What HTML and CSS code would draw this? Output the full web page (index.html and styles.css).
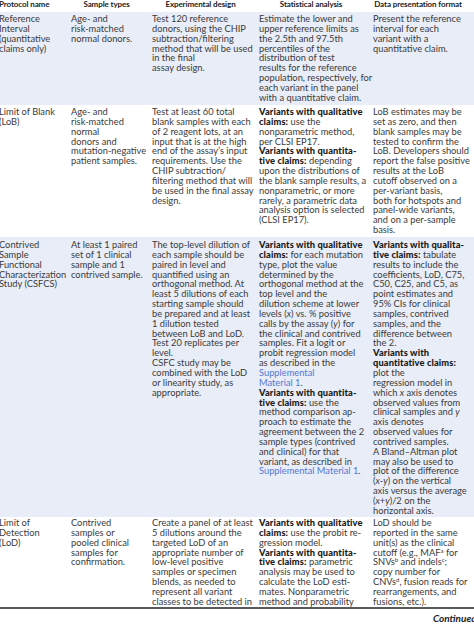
FILE: index.html
```html
<!DOCTYPE html>
<html>
<head>
<meta charset="utf-8">
<link rel="stylesheet" href="styles.css">
</head>
<body>
<div class="page">
  <div class="table">
    <div class="row head">
      <div class="cell first">Protocol name</div>
      <div class="cell">Sample types</div>
      <div class="cell">Experimental design</div>
      <div class="cell">Statistical analysis</div>
      <div class="cell">Data presentation format</div>
    </div>

    <div class="row blue r1">
      <div class="cell first">Reference<br>Interval<br>(quantitative<br>claims only)</div>
      <div class="cell">Age- and<br>risk-matched<br>normal donors.</div>
      <div class="cell">Test 120 reference<br>donors, using the CHIP<br>subtraction/filtering<br>method that will be used<br>in the final<br>assay design.</div>
      <div class="cell stat">Estimate the lower and<br>upper reference limits as<br>the 2.5th and 97.5th<br>percentiles of the<br>distribution of test<br>results for the reference<br>population, respectively, for<br>each variant in the panel<br>with a quantitative claim.</div>
      <div class="cell">Present the reference<br>interval for each<br>variant with a<br>quantitative claim.</div>
    </div>

    <div class="row r2">
      <div class="cell first">Limit of Blank<br>(LoB)</div>
      <div class="cell">Age- and<br>risk-matched<br>normal<br>donors and<br>mutation-negative<br>patient samples.</div>
      <div class="cell">Test at least 60 total<br>blank samples with each<br>of 2 reagent lots, at an<br>input that is at the high<br>end of the assay’s input<br>requirements. Use the<br>CHIP subtraction/<br>filtering method that will<br>be used in the final assay<br>design.</div>
      <div class="cell stat"><b>Variants with qualitative</b><br><b>claims:</b> use the<br>nonparametric method,<br>per CLSI EP17.<br><b>Variants with quantita-</b><br><b>tive claims:</b> depending<br>upon the distributions of<br>the blank sample results, a<br>nonparametric, or more<br>rarely, a parametric data<br>analysis option is selected<br>(CLSI EP17).</div>
      <div class="cell">LoB estimates may be<br>set as zero, and then<br>blank samples may be<br>tested to confirm the<br>LoB. Developers should<br>report the false positive<br>results at the LoB<br>cutoff observed on a<br>per-variant basis,<br>both for hotspots and<br>panel-wide variants,<br>and on a per-sample<br>basis.</div>
    </div>

    <div class="row blue r3">
      <div class="cell first">Contrived<br>Sample<br>Functional<br>Characterization<br>Study (CSFCS)</div>
      <div class="cell">At least 1 paired<br>set of 1 clinical<br>sample and 1<br>contrived sample.</div>
      <div class="cell">The top-level dilution of<br>each sample should be<br>paired in level and<br>quantified using an<br>orthogonal method. At<br>least 5 dilutions of each<br>starting sample should<br>be prepared and at least<br>1 dilution tested<br>between LoB and LoD.<br>Test 20 replicates per<br>level.<br>CSFC study may be<br>combined with the LoD<br>or linearity study, as<br>appropriate.</div>
      <div class="cell stat"><b>Variants with qualitative</b><br><b>claims:</b> for each mutation<br>type, plot the value<br>determined by the<br>orthogonal method at the<br>top level and the<br>dilution scheme at lower<br>levels (<i>x</i>) vs. % positive<br>calls by the assay (<i>y</i>) for<br>the clinical and contrived<br>samples. Fit a logit or<br>probit regression model<br>as described in the<br><span class="link">Supplemental</span><br><span class="link">Material 1</span>.<br><b>Variants with quantita-</b><br><b>tive claims:</b> use the<br>method comparison ap-<br>proach to estimate the<br>agreement between the 2<br>sample types (contrived<br>and clinical) for that<br>variant, as described in<br><span class="link">Supplemental Material 1</span>.</div>
      <div class="cell"><b>Variants with qualita-</b><br><b>tive claims:</b> tabulate<br>results to include the<br>coefficients, LoD, C75,<br>C50, C25, and C5, as<br>point estimates and<br>95% CIs for clinical<br>samples, contrived<br>samples, and the<br>difference between<br>the 2.<br><b>Variants with</b><br><b>quantitative claims:</b><br>plot the<br>regression model in<br>which <i>x</i> axis denotes<br>observed values from<br>clinical samples and <i>y</i><br>axis denotes<br>observed values for<br>contrived samples.<br>A Bland–Altman plot<br>may also be used to<br>plot of the difference<br>(<i>x</i>-<i>y</i>) on the vertical<br>axis versus the average<br>(<i>x</i>+<i>y</i>)/2 on the<br>horizontal axis.</div>
    </div>

    <div class="row r4">
      <div class="cell first">Limit of<br>Detection<br>(LoD)</div>
      <div class="cell">Contrived<br>samples or<br>pooled clinical<br>samples for<br>confirmation.</div>
      <div class="cell">Create a panel of at least<br>5 dilutions around the<br>targeted LoD of an<br>appropriate number of<br>low-level positive<br>samples or specimen<br>blends, as needed to<br>represent all variant<br>classes to be detected in</div>
      <div class="cell stat"><b>Variants with qualitative</b><br><b>claims:</b> use the probit re-<br>gression model.<br><b>Variants with quantita-</b><br><b>tive claims:</b> parametric<br>analysis may be used to<br>calculate the LoD esti-<br>mates. Nonparametric<br>method and probability</div>
      <div class="cell">LoD should be<br>reported in the same<br>unit(s) as the clinical<br>cutoff (e.g., MAF<sup>a</sup> for<br>SNVs<sup>b</sup> and indels<sup>c</sup>;<br>copy number for<br>CNVs<sup>d</sup>, fusion reads for<br>rearrangements, and<br>fusions, etc.).</div>
    </div>
  </div>
  <div class="continued">Continued</div>
</div>
</body>
</html>
```

FILE: styles.css
```css
html, body {
  margin: 0;
  padding: 0;
  background: #ffffff;
}
.page {
  width: 474px;
  height: 625px;
  overflow: hidden;
  font-family: Lato, "Noto Sans", sans-serif;
  color: #3b3b3b;
}
.table {
  display: flex;
  flex-direction: column;
  width: 474px;
  border-bottom: 2px solid #5a5a5a;
}
.row {
  display: grid;
  grid-template-columns: 72px 81px 107px 114px 100px;
  overflow: hidden;
  margin-left: -1px;
}
.blue {
  background: #e8edf7;
}
.cell {
  font-size: 9.3px;
  line-height: 9.85px;
  white-space: nowrap;
  padding-top: 2px;
  padding-right: 10px;
}
.head {
  height: 12px;
}
.head .cell {
  font-size: 8px;
  font-weight: 700;
  line-height: 10px;
  padding-top: 0;
  margin-top: -1px;
  text-align: center;
  color: #222;
  letter-spacing: -0.1px;
}
.head .cell.first {
  text-align: left;
}
.r1 { height: 93px; }
.r2 { height: 132px; }
.r3 { height: 280px; }
.r4 { height: 90px; }
.r3 .cell { padding-top: 3px; }
.r4 .cell { padding-top: 1px; }
b {
  font-weight: 900;
  color: #1a1a1a;
  letter-spacing: 0.1px;
}
.link {
  color: #5578d6;
}
sup {
  font-size: 6px;
  line-height: 0;
  vertical-align: 3px;
}
.continued {
  margin-top: 3px;
  margin-left: 433px;
  font-size: 10px;
  font-weight: 700;
  font-style: italic;
  white-space: nowrap;
  color: #222;
}
```
